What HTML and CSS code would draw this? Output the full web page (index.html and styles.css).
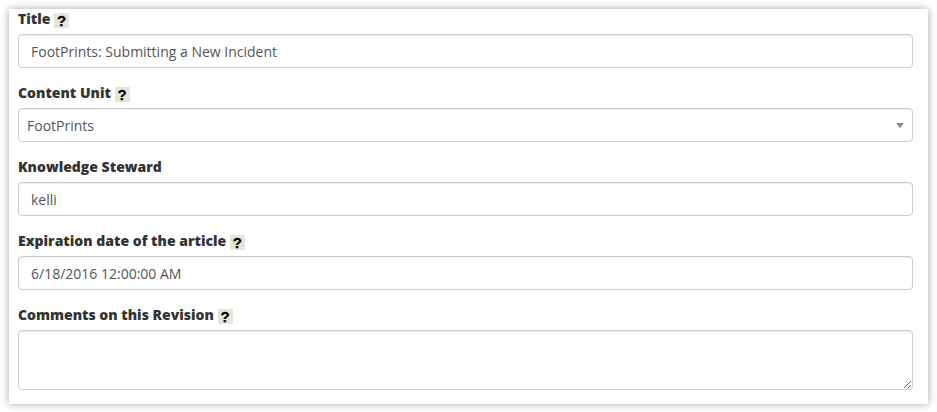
FILE: index.html
```html
<!DOCTYPE html>
<html lang="en">
<head>
    <meta charset="UTF-8">
    <title>Edit Article</title>
    <link rel="stylesheet" href="styles.css">
</head>
<body>
    <form class="card">
        <div class="form-group">
            <label for="title">Title <span class="help">?</span></label>
            <input type="text" id="title" value="FootPrints: Submitting a New Incident">
        </div>
        <div class="form-group">
            <label for="unit">Content Unit <span class="help">?</span></label>
            <div class="select-wrap">
                <select id="unit">
                    <option>FootPrints</option>
                </select>
            </div>
        </div>
        <div class="form-group">
            <label for="steward">Knowledge Steward</label>
            <input type="text" id="steward" value="kelli">
        </div>
        <div class="form-group">
            <label for="expires">Expiration date of the article <span class="help">?</span></label>
            <input type="text" id="expires" value="6/18/2016 12:00:00 AM">
        </div>
        <div class="form-group">
            <label for="comments">Comments on this Revision <span class="help">?</span></label>
            <textarea id="comments"></textarea>
        </div>
    </form>
</body>
</html>
```

FILE: styles.css
```css
* {
    box-sizing: border-box;
}
body {
    margin: 0;
    padding: 9px;
    background-color: #fff;
    font-family: "Open Sans", sans-serif;
    font-size: 14px;
    color: #333;
}
.card {
    background-color: #fff;
    padding: 0 15px 14px 9px;
    box-shadow: 0 0 8px rgba(0, 0, 0, 0.35);
}
.form-group {
    margin-bottom: 15px;
}
.form-group:last-child {
    margin-bottom: 0;
}
.form-group label {
    display: block;
    height: 20px;
    margin-bottom: 5px;
    line-height: 20px;
    font-weight: 800;
}
.help {
    display: inline-block;
    width: 15px;
    height: 15px;
    background-color: #e6e6d8;
    color: #000;
    font-family: "Liberation Sans", sans-serif;
    font-size: 15px;
    font-weight: 700;
    line-height: 16px;
    text-align: center;
    -webkit-text-stroke: 0.3px #000;
    vertical-align: -2px;
}
input,
select,
textarea {
    display: block;
    width: 100%;
    height: 34px;
    padding: 6px 12px;
    border: 1px solid #ccc;
    border-radius: 4px;
    background-color: #fff;
    color: #555;
    font-family: "Open Sans", sans-serif;
    font-size: 14px;
    box-shadow: inset 0 1px 1px rgba(0, 0, 0, 0.075);
}
select {
    padding: 6px 8px;
    appearance: none;
}
textarea {
    height: 60px;
}
.select-wrap {
    position: relative;
}
.select-wrap::after {
    content: "";
    position: absolute;
    top: 15px;
    right: 9px;
    border-top: 5px solid #888;
    border-left: 4px solid transparent;
    border-right: 4px solid transparent;
}
```
